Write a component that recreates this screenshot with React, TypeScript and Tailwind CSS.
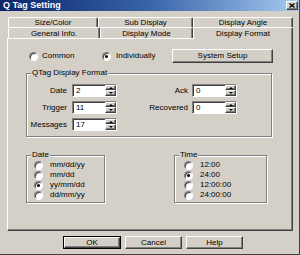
import type { ReactNode } from "react";

const raised =
  "border border-t-white border-l-white border-r-[#404040] border-b-[#404040] shadow-[inset_-1px_-1px_0_#808080] bg-[#d4d0c8]";

function Radio({ checked }: { checked?: boolean }) {
  return (
    <span className="flex h-[9px] w-[9px] shrink-0 items-center justify-center rounded-full border border-t-[#808080] border-l-[#808080] border-r-white border-b-white bg-white shadow-[inset_1px_1px_0_#404040]">
      {checked ? <span className="h-[3px] w-[3px] rounded-full bg-black" /> : null}
    </span>
  );
}

function RadioItem({ label, checked }: { label: string; checked?: boolean }) {
  return (
    <div className="flex h-[10px] items-center gap-[7px]">
      <Radio checked={checked} />
      <span className="leading-[10px]">{label}</span>
    </div>
  );
}

function Spin({ value }: { value: string }) {
  return (
    <div className="flex h-[13px] w-[45px] border border-t-[#808080] border-l-[#808080] border-r-white border-b-white bg-white shadow-[inset_1px_1px_0_#404040]">
      <span className="flex-1 pl-[3px] pt-px leading-[10px]">{value}</span>
      <div className="flex w-[11px] flex-col">
        <div className={`flex h-[5px] items-center justify-center ${raised}`}>
          <span className="h-0 w-0 border-x-[2px] border-b-[2px] border-x-transparent border-b-black" />
        </div>
        <div className={`flex h-[6px] items-center justify-center ${raised}`}>
          <span className="h-0 w-0 border-x-[2px] border-t-[2px] border-x-transparent border-t-black" />
        </div>
      </div>
    </div>
  );
}

function Group({ title, className, children }: { title: string; className: string; children: ReactNode }) {
  return (
    <div className={`relative border border-[#808080] shadow-[inset_1px_1px_0_#fff,1px_1px_0_#fff] ${className}`}>
      <span className="absolute -top-[6px] left-[4px] bg-[#d4d0c8] px-px leading-[10px]">{title}</span>
      {children}
    </div>
  );
}

function Tab({ label, className }: { label: string; className: string }) {
  return (
    <div
      className={`flex items-center justify-center rounded-t-[2px] border-t border-l border-r border-t-white border-l-white border-r-[#404040] bg-[#d4d0c8] shadow-[inset_-1px_0_0_#808080] leading-[9px] ${className}`}
    >
      {label}
    </div>
  );
}

function Field({ label, value, labelW }: { label: string; value: string; labelW: string }) {
  return (
    <div className="flex h-[13px] items-center">
      <span className={`text-right leading-[10px] ${labelW}`}>{label}</span>
      <Spin value={value} />
    </div>
  );
}

export default function App() {
  return (
    <div className="h-[255px] w-[300px] overflow-hidden border-r border-b border-r-[#404040] border-b-[#404040] bg-[#d4d0c8] font-['Liberation_Sans',Arial,sans-serif] text-[8px] text-black">
      {/* title bar */}
      <div className="flex h-[11px] items-center justify-between bg-linear-to-r from-[#0a246a] via-[#3a64a8] to-[#a6caf0] pl-[3px] pr-[1px]">
        <span className="text-[9px] font-bold leading-[11px] text-white">Q Tag Setting</span>
        <div className={`flex h-[9px] w-[12px] items-center justify-center ${raised}`}>
          <svg width="6" height="5" viewBox="0 0 6 5">
            <path d="M0.5 0.5L5.5 4.5M5.5 0.5L0.5 4.5" stroke="#000" strokeWidth="1.3" />
          </svg>
        </div>
      </div>

      {/* tabs */}
      <div className="ml-[8px] mt-[6px] flex w-[285px] flex-col">
        <div className="flex h-[10px]">
          <Tab label="Size/Color" className="h-[10px] w-[90px]" />
          <Tab label="Sub Display" className="h-[10px] w-[95px]" />
          <Tab label="Display Angle" className="h-[10px] w-[100px]" />
        </div>
        <div className="flex h-[11px] items-start">
          <Tab label="General Info." className="h-[11px] w-[92px]" />
          <Tab label="Display Mode" className="h-[11px] w-[93px]" />
          <Tab label="Display Format" className="relative z-10 h-[12px] w-[100px] pb-px" />
        </div>
      </div>

      {/* panel */}
      <div className="ml-[7px] flex h-[193px] w-[286px] flex-col border border-t-white border-l-white border-r-[#404040] border-b-[#404040] shadow-[inset_-1px_-1px_0_#808080]">
        <div className="mt-[10px] flex h-[14px] items-center">
          <div className="ml-[21px] flex w-[73px] items-center gap-[4px]">
            <Radio />
            <span className="leading-[10px]">Common</span>
          </div>
          <div className="flex w-[70px] items-center gap-[5px]">
            <Radio checked />
            <span className="leading-[10px]">Individually</span>
          </div>
          <div className={`flex h-[14px] w-[101px] items-center justify-center leading-[10px] ${raised}`}>
            System Setup
          </div>
        </div>

        <Group title="QTag Display Format" className="ml-[18px] mt-[10px] h-[64px] w-[246px]">
          <div className="flex pt-[10px]">
            <div className="flex flex-col gap-[4px]">
              <Field label="Date" value="2" labelW="w-[45px] pr-[5px]" />
              <Field label="Trigger" value="11" labelW="w-[45px] pr-[5px]" />
              <Field label="Messages" value="17" labelW="w-[45px] pr-[5px]" />
            </div>
            <div className="ml-[5px] flex flex-col gap-[4px]">
              <Field label="Ack" value="0" labelW="w-[70px] pr-[4px]" />
              <Field label="Recovered" value="0" labelW="w-[70px] pr-[4px]" />
            </div>
          </div>
        </Group>

        <div className="mt-[18px] flex">
          <Group title="Date" className="ml-[18px] h-[48px] w-[79px]">
            <div className="flex flex-col pl-[7px] pt-[4px]">
              <RadioItem label="mm/dd/yy" />
              <RadioItem label="mm/dd" />
              <RadioItem label="yy/mm/dd" checked />
              <RadioItem label="dd/mm/yy" />
            </div>
          </Group>
          <Group title="Time" className="ml-[69px] h-[48px] w-[93px]">
            <div className="flex flex-col pl-[9px] pt-[4px]">
              <RadioItem label="12:00" />
              <RadioItem label="24:00" checked />
              <RadioItem label="12:00:00" />
              <RadioItem label="24:00:00" />
            </div>
          </Group>
        </div>
      </div>

      {/* buttons */}
      <div className="ml-[63px] mt-[5px] flex gap-[4px]">
        <div className="h-[13px] w-[58px] border border-black">
          <div className={`flex h-full w-full items-center justify-center leading-[10px] ${raised}`}>OK</div>
        </div>
        <div className={`flex h-[13px] w-[57px] items-center justify-center leading-[10px] ${raised}`}>Cancel</div>
        <div className={`flex h-[13px] w-[57px] items-center justify-center leading-[10px] ${raised}`}>Help</div>
      </div>
    </div>
  );
}
